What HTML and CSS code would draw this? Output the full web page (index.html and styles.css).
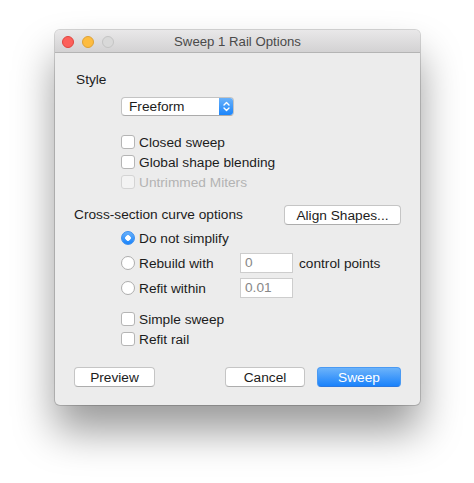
FILE: index.html
```html
<!DOCTYPE html>
<html lang="en">
  <head>
    <meta charset="UTF-8" />
    <title>Sweep 1 Rail Options</title>
    <link rel="stylesheet" href="styles.css">
  </head>
  <body>
    <div class="window">
      <div class="titlebar">
        <div class="lights">
          <span class="light close"></span>
          <span class="light min"></span>
          <span class="light zoom"></span>
        </div>
        <span class="title">Sweep 1 Rail Options</span>
      </div>
      <div class="content">
        <div class="heading style-label">Style</div>
        <div class="popup-row">
          <div class="popup">
            <span class="popup-value">Freeform</span>
            <span class="popup-arrows">
              <svg width="7" height="11" viewBox="0 0 7 11">
                <path d="M1 4 L3.5 1.5 L6 4 M1 7 L3.5 9.5 L6 7" fill="none" stroke="#fff" stroke-width="1.4" stroke-linecap="round" stroke-linejoin="round"/>
              </svg>
            </span>
          </div>
        </div>
        <div class="checks">
          <label class="check"><span class="box"></span>Closed sweep</label>
          <label class="check"><span class="box"></span>Global shape blending</label>
          <label class="check disabled"><span class="box"></span>Untrimmed Miters</label>
        </div>
        <div class="section-row">
          <span class="heading">Cross-section curve options</span>
          <button class="btn align-btn">Align Shapes...</button>
        </div>
        <div class="radios">
          <div class="radio-row">
            <label class="radio"><span class="dot on"></span>Do not simplify</label>
          </div>
          <div class="radio-row">
            <label class="radio"><span class="dot"></span>Rebuild with</label>
            <span class="field">0</span>
            <span class="suffix">control points</span>
          </div>
          <div class="radio-row">
            <label class="radio"><span class="dot"></span>Refit within</label>
            <span class="field">0.01</span>
          </div>
        </div>
        <div class="checks lower">
          <label class="check"><span class="box"></span>Simple sweep</label>
          <label class="check"><span class="box"></span>Refit rail</label>
        </div>
        <div class="footer-row">
          <button class="btn preview-btn">Preview</button>
          <div class="right-btns">
            <button class="btn cancel-btn">Cancel</button>
            <button class="btn primary">Sweep</button>
          </div>
        </div>
      </div>
    </div>
  </body>
</html>
```

FILE: styles.css
```css
* {
  margin: 0;
  padding: 0;
  box-sizing: border-box;
}
html, body {
  min-height: 100vh;
}
body {
  background-color: #fff;
  font-family: "Liberation Sans", Arial, sans-serif;
  font-size: 13.7px;
  color: #1c1c1c;
  padding-top: 30px;
}
.window {
  width: 365px;
  height: 375px;
  margin-left: 55px;
  background-color: #ececec;
  border-radius: 5px;
  box-shadow: 0 0 0 1px rgba(0, 0, 0, 0.16), 0 26px 42px rgba(0, 0, 0, 0.4);
  overflow: hidden;
}
.titlebar {
  position: relative;
  height: 23px;
  background: linear-gradient(#e9e8e9, #d3d2d3);
  border-bottom: 1px solid #b4b4b4;
  display: flex;
  align-items: center;
  justify-content: center;
}
.lights {
  position: absolute;
  left: 7px;
  top: 6px;
  display: flex;
  gap: 8px;
}
.light {
  width: 12px;
  height: 12px;
  border-radius: 50%;
}
.close {
  background-color: #fc605b;
  border: 1px solid #e0443e;
}
.min {
  background-color: #fdbc40;
  border: 1px solid #dea236;
}
.zoom {
  background-color: #d9d9d9;
  border: 1px solid #c4c4c4;
}
.title {
  color: #4a4a4a;
  font-size: 13.2px;
}
.content {
  padding: 17px 19px 0 19px;
}
.heading {
  height: 20px;
  line-height: 20px;
}
.style-label {
  padding-left: 2px;
}
.popup-row {
  padding: 7px 0 0 47px;
}
.popup {
  width: 113px;
  height: 19px;
  display: flex;
  background-color: #fff;
  border: 1px solid #c3c3c3;
  border-bottom-color: #ababab;
  border-radius: 4px;
  overflow: hidden;
}
.popup-value {
  flex: 1;
  line-height: 17px;
  padding-left: 7px;
}
.popup-arrows {
  width: 14px;
  background: linear-gradient(#69b1fa, #1b85fb);
  display: flex;
  align-items: center;
  justify-content: center;
}
.checks {
  padding: 16px 0 0 47px;
  display: flex;
  flex-direction: column;
}
.check, .radio {
  height: 20px;
  display: flex;
  align-items: center;
  gap: 4px;
}
.box {
  width: 14px;
  height: 14px;
  background-color: #fff;
  border: 1px solid #b5b5b5;
  border-radius: 3px;
}
.check.disabled {
  color: #b3b3b3;
}
.check.disabled .box {
  background-color: #f3f3f3;
  border-color: #d4d4d4;
}
.section-row {
  margin-top: 13px;
  height: 20px;
  display: flex;
  justify-content: space-between;
  align-items: center;
}
.btn {
  height: 20px;
  font-family: inherit;
  font-size: 13.7px;
  color: #1c1c1c;
  background-color: #fff;
  border: 1px solid #c5c5c5;
  border-bottom-color: #adadad;
  border-radius: 4px;
}
.align-btn {
  width: 117px;
}
.radios {
  padding: 3px 0 0 47px;
  display: flex;
  flex-direction: column;
  gap: 5px;
}
.radio-row {
  height: 20px;
  display: flex;
  align-items: center;
}
.radio {
  width: 119px;
  gap: 4px;
}
.dot {
  width: 14px;
  height: 14px;
  border-radius: 50%;
  background-color: #fff;
  border: 1px solid #adadad;
}
.dot.on {
  background: radial-gradient(circle, #fff 0 2.5px, transparent 3px), linear-gradient(#68b0fa, #1a84fb);
  border-color: #3b8ff0;
}
.field {
  width: 53px;
  height: 20px;
  line-height: 18px;
  padding-left: 4px;
  color: #888;
  background-color: #fff;
  border: 1px solid #cdcdcd;
}
.suffix {
  margin-left: 6px;
}
.checks.lower {
  padding-top: 11px;
}
.footer-row {
  margin-top: 18px;
  display: flex;
  justify-content: space-between;
}
.preview-btn {
  width: 81px;
}
.right-btns {
  display: flex;
  gap: 12px;
}
.cancel-btn {
  width: 80px;
}
.primary {
  width: 84px;
  color: #fff;
  background: linear-gradient(#6cb3fa, #1a82fb);
  border-color: #4a9af3;
  border-bottom-color: #2a78e0;
}
```
